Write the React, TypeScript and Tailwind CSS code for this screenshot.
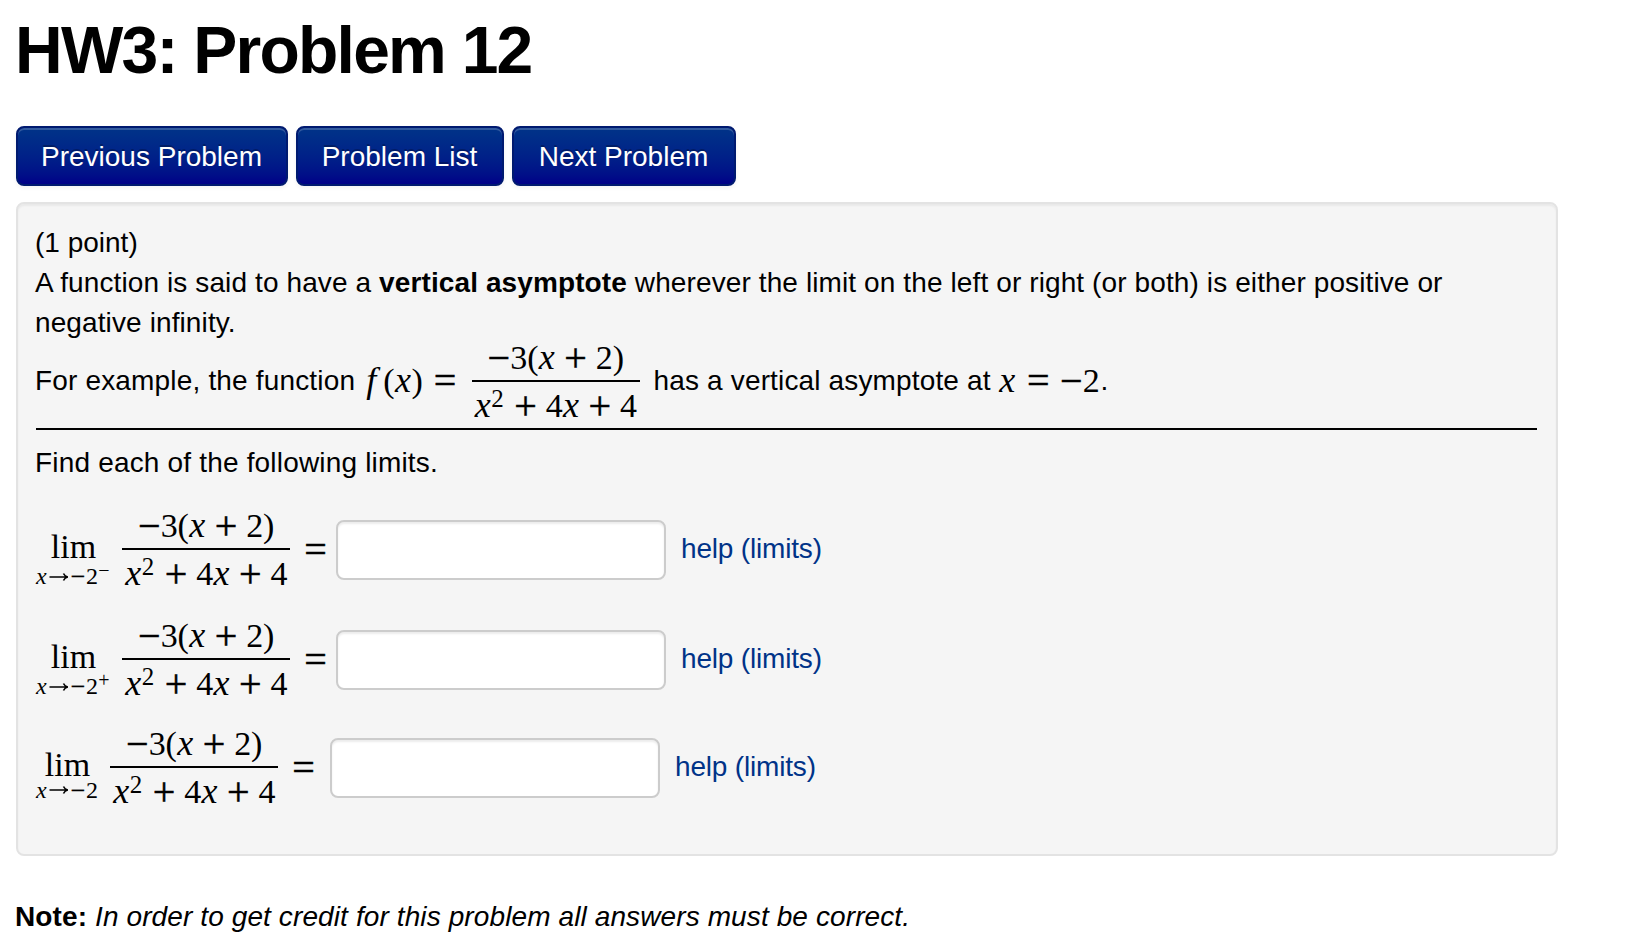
import React from 'react';

const navButtons = [
  { id: 'prev', label: 'Previous Problem', width: 'w-[272px]' },
  { id: 'list', label: 'Problem List', width: 'w-[208px]' },
  { id: 'next', label: 'Next Problem', width: 'w-[224px]' },
];

const limits = [
  { id: 'left', sup: '−', row: 'h-[110px]', block: 'w-[74px]', gap: 'ml-[9px]' },
  { id: 'right', sup: '+', row: 'h-[110px]', block: 'w-[74px]', gap: 'ml-[9px]' },
  { id: 'both', sup: '', row: 'h-[106px]', block: 'w-[62px]', gap: 'ml-[15px]' },
];

interface SymbolProps {
  children: React.ReactNode;
  className?: string;
}

// Operator such as + or =, drawn a bit larger than the digits
function Op({ children, className = 'w-[23px]' }: SymbolProps) {
  return (
    <span className={`relative top-[2px] inline-block text-center text-[40px] [-webkit-text-stroke:0.5px_black] ${className}`}>
      {children}
    </span>
  );
}

function Digit({ children }: SymbolProps) {
  return <span className="inline-block w-[16.8px] text-center">{children}</span>;
}

function Paren({ children }: SymbolProps) {
  return <span className="inline-block w-[11.2px] text-center">{children}</span>;
}

function VarX() {
  return <span className="inline-block w-[17px] text-center text-[36px] italic">x</span>;
}

function Fraction() {
  return (
    <span className="flex h-[78px] w-[168px] shrink-0 flex-col font-['Liberation_Serif',serif] text-[34px]">
      <span className="flex h-[38px] items-baseline justify-center leading-[28px]">
        <Op>−</Op>
        <Digit>3</Digit>
        <Paren>(</Paren>
        <VarX />
        <Op className="w-[40.5px]">+</Op>
        <Digit>2</Digit>
        <Paren>)</Paren>
      </span>
      <span className="h-[2px] shrink-0 bg-black" />
      <span className="flex h-[38px] items-baseline justify-center leading-[44px]">
        <VarX />
        <span className="relative -top-[10px] inline-block w-[14px] pr-[2px] text-center text-[25px]">2</span>
        <Op className="w-[40.5px]">+</Op>
        <Digit>4</Digit>
        <VarX />
        <Op className="w-[40.5px]">+</Op>
        <Digit>4</Digit>
      </span>
    </span>
  );
}

function Limit({ sup, width }: { sup: string; width: string }) {
  return (
    <span className={`flex h-[78px] shrink-0 flex-col items-center pt-[17px] font-['Liberation_Serif',serif] ${width}`}>
      <span className="pl-px text-[34px] leading-[40px]">lim</span>
      <span className={`flex w-full items-baseline text-[24px] leading-[19px] ${sup ? '-mt-px' : '-mt-[5px]'}`}>
        <span className="w-[12px] italic">x</span>
        <svg className="mx-[1px] h-[10px] w-[20px] self-center" viewBox="0 0 20 10" fill="none" stroke="black" strokeWidth="1.6">
          <path d="M0.5 5H18.5M14.5 1.5C15.3 3.4 16.8 4.5 18.8 5C16.8 5.5 15.3 6.6 14.5 8.5" />
        </svg>
        <span className="relative top-px w-[16px] text-center text-[26px] [-webkit-text-stroke:0.3px_black]">−</span>
        <span className="w-[12px] text-center">2</span>
        {sup && <span className="relative -top-[7px] w-[12px] text-center text-[20px]">{sup}</span>}
      </span>
    </span>
  );
}

export default function App() {
  return (
    <div className="h-[948px] w-[1648px] overflow-hidden bg-white pl-4 font-['Liberation_Sans',Arial,sans-serif] text-[28px] leading-[40px] text-black">
      <h1 className="-ml-px pt-[10px] text-[66px] font-bold leading-[80px] tracking-[-1.75px]">HW3: Problem 12</h1>

      {/* Problem navigation */}
      <nav className="mt-[36px] flex gap-2">
        {navButtons.map((button) => (
          <button
            key={button.id}
            className={`h-[60px] rounded-lg border-2 border-[#001a70] bg-gradient-to-b from-[#003388] to-[#000088] pr-px pt-[2px] text-white shadow-[inset_0_2px_0_rgba(255,255,255,0.2),0_2px_4px_rgba(0,0,0,0.05)] [text-shadow:0_-2px_0_rgba(0,0,0,0.25)] ${button.width}`}
          >
            {button.label}
          </button>
        ))}
      </nav>

      {/* Problem body */}
      <main className="mt-4 h-[654px] w-[1542px] rounded-lg border-2 border-[#e3e3e3] bg-[#f5f5f5] pl-[17px] pr-[19px] pt-[19px] shadow-[inset_0_2px_2px_rgba(0,0,0,0.05)]">
        <p>(1 point)</p>
        <p className="whitespace-nowrap tracking-[0.11px]">
          A function is said to have a <b>vertical asymptote</b> wherever the limit on the left or right (or both) is either positive or
          <br />
          negative infinity.
        </p>
        <div className="-mt-px flex h-[78px] items-center whitespace-nowrap">
          <span className="tracking-[0.17px]">For example, the function</span>
          <span className="-mt-[3px] ml-[4px] flex items-baseline font-['Liberation_Serif',serif] text-[34px]">
            <span className="w-[24px] text-center text-[36px] italic">f</span>
            <Paren>(</Paren>
            <VarX />
            <Paren>)</Paren>
            <Op className="ml-[11px] w-[23px]">=</Op>
          </span>
          <span className="ml-[15px]">
            <Fraction />
          </span>
          <span className="ml-[14px] tracking-[0.15px]">has a vertical asymptote at</span>
          <span className="-mt-[3px] ml-[8px] flex items-baseline font-['Liberation_Serif',serif] text-[34px]">
            <VarX />
            <Op className="ml-[11px] w-[23px]">=</Op>
            <Op className="ml-[10px] w-[23px]">−</Op>
            <Digit>2</Digit>
          </span>
          <span className="ml-px">.</span>
        </div>
        <hr className="ml-px mt-2 border-t-2 border-black" />
        <p className="mt-[13px] tracking-[0.18px]">Find each of the following limits.</p>

        <div className="ml-px mt-[11px]">
          {limits.map((limit) => (
            <div key={limit.id} className={`flex items-center ${limit.row}`}>
              <Limit sup={limit.sup} width={limit.block} />
              <span className="ml-3">
                <Fraction />
              </span>
              <span className="ml-[14px] mt-[2px] font-['Liberation_Serif',serif]">
                <Op>=</Op>
              </span>
              <input
                type="text"
                className={`mt-[2px] h-[60px] w-[330px] rounded-lg border-2 border-[#ccc] bg-white px-3 shadow-[inset_0_2px_2px_rgba(0,0,0,0.075)] outline-none ${limit.gap}`}
              />
              <a href="#" className="ml-[15px] tracking-[-0.18px] text-[#003388]">
                help (limits)
              </a>
            </div>
          ))}
        </div>
      </main>

      <p className="-ml-px mt-[41px] tracking-[0.11px]">
        <b>Note:</b> <i>In order to get credit for this problem all answers must be correct.</i>
      </p>
    </div>
  );
}
